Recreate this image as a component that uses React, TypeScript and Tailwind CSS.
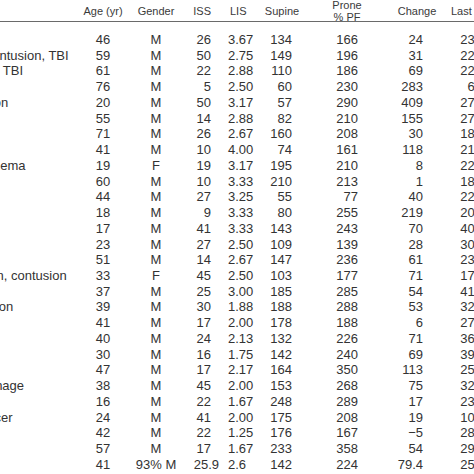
import React from "react";

type Patient = {
  dx: string;
  age: string;
  sex: string;
  iss: string;
  lis: string;
  supine: string;
  prone: string;
  change: string;
  last: string;
};

// first column is cropped on the left in the source, only the tails of the text show
const patients: Patient[] = [
  { dx: "Pneumonia", age: "46", sex: "M", iss: "26", lis: "3.67", supine: "134", prone: "166", change: "24", last: "234" },
  { dx: "Pulmonary contusion, TBI", age: "59", sex: "M", iss: "50", lis: "2.75", supine: "149", prone: "196", change: "31", last: "221" },
  { dx: "Skull fracture, TBI", age: "61", sex: "M", iss: "22", lis: "2.88", supine: "110", prone: "186", change: "69", last: "226" },
  { dx: "Aspiration", age: "76", sex: "M", iss: "5", lis: "2.50", supine: "60", prone: "230", change: "283", last: "68" },
  { dx: "Lung contusion", age: "20", sex: "M", iss: "50", lis: "3.17", supine: "57", prone: "290", change: "409", last: "271" },
  { dx: "Sepsis", age: "55", sex: "M", iss: "14", lis: "2.88", supine: "82", prone: "210", change: "155", last: "275" },
  { dx: "Rib fractures", age: "71", sex: "M", iss: "26", lis: "2.67", supine: "160", prone: "208", change: "30", last: "183" },
  { dx: "Hemothorax", age: "41", sex: "M", iss: "10", lis: "4.00", supine: "74", prone: "161", change: "118", last: "215" },
  { dx: "Pulmonary edema", age: "19", sex: "F", iss: "19", lis: "3.17", supine: "195", prone: "210", change: "8", last: "224" },
  { dx: "Pneumonia", age: "60", sex: "M", iss: "10", lis: "3.33", supine: "210", prone: "213", change: "1", last: "186" },
  { dx: "Flail chest", age: "44", sex: "M", iss: "27", lis: "3.25", supine: "55", prone: "77", change: "40", last: "220" },
  { dx: "Aspiration", age: "18", sex: "M", iss: "9", lis: "3.33", supine: "80", prone: "255", change: "219", last: "203" },
  { dx: "Sepsis", age: "17", sex: "M", iss: "41", lis: "3.33", supine: "143", prone: "243", change: "70", last: "405" },
  { dx: "Rib fractures", age: "23", sex: "M", iss: "27", lis: "2.50", supine: "109", prone: "139", change: "28", last: "302" },
  { dx: "Pancreatitis", age: "51", sex: "M", iss: "14", lis: "2.67", supine: "147", prone: "236", change: "61", last: "231" },
  { dx: "Arm laceration, contusion", age: "33", sex: "F", iss: "45", lis: "2.50", supine: "103", prone: "177", change: "71", last: "176" },
  { dx: "Hemothorax", age: "37", sex: "M", iss: "25", lis: "3.00", supine: "185", prone: "285", change: "54", last: "412" },
  { dx: "Chest contusion", age: "39", sex: "M", iss: "30", lis: "1.88", supine: "188", prone: "288", change: "53", last: "325" },
  { dx: "Pneumonia", age: "41", sex: "M", iss: "17", lis: "2.00", supine: "178", prone: "188", change: "6", last: "271" },
  { dx: "Flail chest", age: "40", sex: "M", iss: "24", lis: "2.13", supine: "132", prone: "226", change: "71", last: "362" },
  { dx: "Aspiration", age: "30", sex: "M", iss: "16", lis: "1.75", supine: "142", prone: "240", change: "69", last: "394" },
  { dx: "Sepsis", age: "47", sex: "M", iss: "17", lis: "2.17", supine: "164", prone: "350", change: "113", last: "252" },
  { dx: "Brain hemorrhage", age: "38", sex: "M", iss: "45", lis: "2.00", supine: "153", prone: "268", change: "75", last: "320" },
  { dx: "Rib fractures", age: "16", sex: "M", iss: "22", lis: "1.67", supine: "248", prone: "289", change: "17", last: "233" },
  { dx: "Perforated ulcer", age: "24", sex: "M", iss: "41", lis: "2.00", supine: "175", prone: "208", change: "19", last: "105" },
  { dx: "Pneumonia", age: "42", sex: "M", iss: "22", lis: "1.25", supine: "176", prone: "167", change: "\u22125", last: "284" },
  { dx: "Hemothorax", age: "57", sex: "M", iss: "17", lis: "1.67", supine: "233", prone: "358", change: "54", last: "295" },
  { dx: "Mean", age: "41", sex: "93% M", iss: "25.9", lis: "2.6", supine: "142", prone: "224", change: "79.4", last: "257" },
];

function DataRow({ p }: { p: Patient }) {
  const decimal = p.iss.includes(".");
  return (
    <div className="flex leading-[15.73px] text-[13px] text-[#333]">
      <div className="w-[160px] shrink-0 whitespace-nowrap">{p.dx}</div>
      <div className="w-[46px] shrink-0 text-center">{p.age}</div>
      <div className="w-[60px] shrink-0 text-center whitespace-nowrap">{p.sex}</div>
      <div className={`w-[36px] shrink-0 text-right ${decimal ? "pr-[3px]" : "pr-[11px]"}`}>{p.iss}</div>
      <div className="w-[40px] shrink-0 pl-[6px]">{p.lis}</div>
      <div className="w-[40px] shrink-0 text-right pr-[10px]">{p.supine}</div>
      <div className="w-[90px] shrink-0 text-right pr-[34px]">{p.prone}</div>
      <div className="w-[50px] shrink-0 text-right pr-[19px]">{p.change}</div>
      <div className="w-[50px] shrink-0 text-right pr-[10px]">{p.last}</div>
    </div>
  );
}

export default function App() {
  return (
    <div className="w-[474px] h-[474px] overflow-hidden bg-white font-['Liberation_Sans',Arial,sans-serif]">
      <div className="-ml-[80px] w-[572px]">
        {/* header */}
        <div className="flex h-[22px] items-center border-b border-[#6a6a6a] text-[11px] leading-[12px] text-[#3a3a3a]">
          <div className="w-[160px] shrink-0" />
          <div className="w-[46px] shrink-0 text-center whitespace-nowrap">Age (yr)</div>
          <div className="w-[60px] shrink-0 text-center">Gender</div>
          <div className="w-[36px] shrink-0 text-right pr-[11px]">ISS</div>
          <div className="w-[40px] shrink-0 pl-[8px]">LIS</div>
          <div className="w-[40px] shrink-0 text-center">Supine</div>
          <div className="w-[90px] shrink-0 text-center">
            <div>Prone</div>
            <div>% PF</div>
          </div>
          <div className="w-[50px] shrink-0 text-center">Change</div>
          <div className="w-[50px] shrink-0 pl-[9px] whitespace-nowrap">Last PF</div>
        </div>
        <div className="pt-[10px]">
          {patients.map((p, i) => (
            <DataRow key={i} p={p} />
          ))}
        </div>
      </div>
    </div>
  );
}
